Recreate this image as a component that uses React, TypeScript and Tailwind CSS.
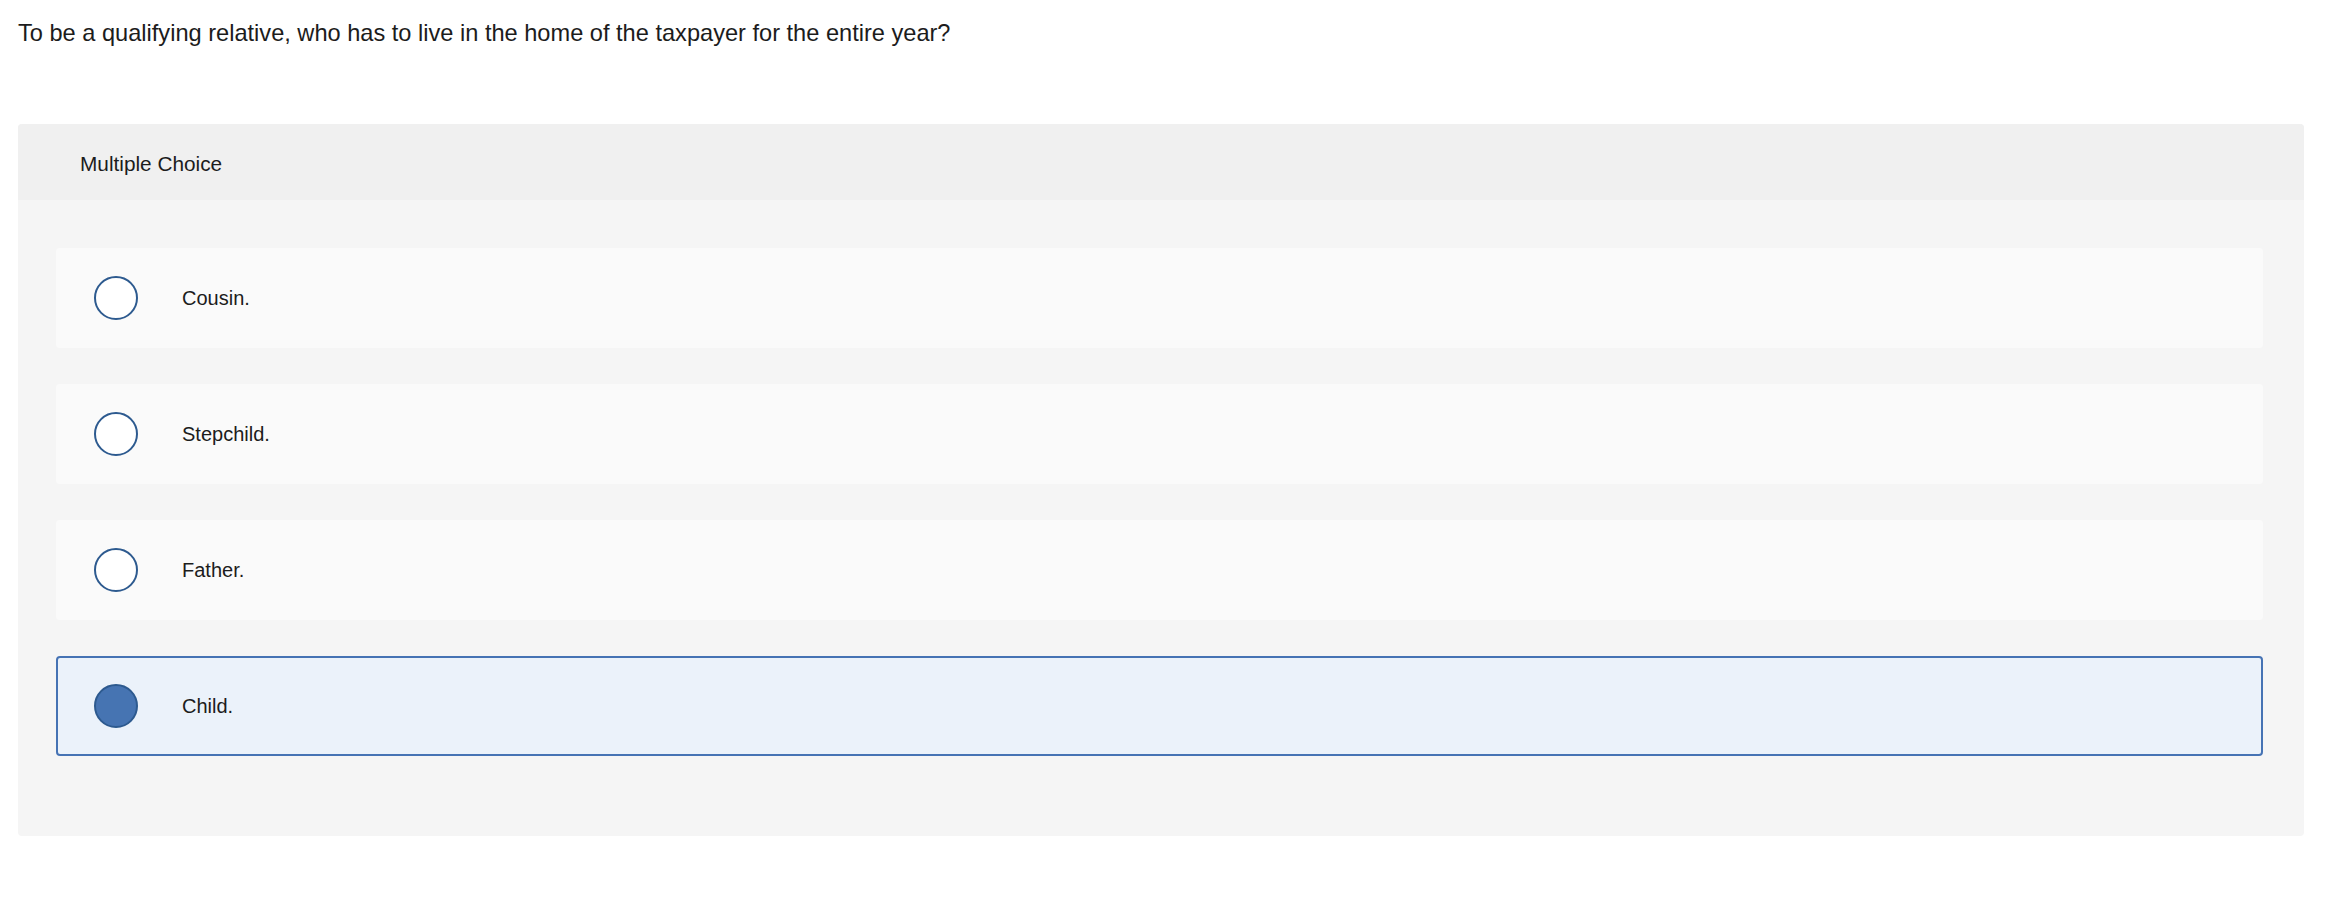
import React, { useState } from 'react';

const options = ['Cousin.', 'Stepchild.', 'Father.', 'Child.'];

export default function App() {
  const [selected, setSelected] = useState(3);

  return (
    <div
      className="min-h-[920px] bg-white pl-[18px] pr-[22px] pt-[16px] text-[#1c1c1c]"
      style={{ fontFamily: '"Liberation Sans", Arial, sans-serif' }}
    >
      {/* Question */}
      <p className="text-[23.6px] leading-[34px]">
        To be a qualifying relative, who has to live in the home of the taxpayer for the entire year?
      </p>

      {/* Answer panel */}
      <div className="mt-[74px] overflow-hidden rounded-[4px] bg-[#f5f5f5]">
        <div className="flex h-[76px] items-center bg-[#f0f0f0] pl-[62px] pt-[3px] text-[20.8px]">
          Multiple Choice
        </div>

        <div className="flex flex-col gap-[36px] pb-[80px] pl-[38px] pr-[41px] pt-[48px]">
          {options.map((label, i) => {
            const isSel = selected === i;
            return (
              <button
                key={label}
                onClick={() => setSelected(i)}
                className={
                  isSel
                    ? 'flex h-[100px] items-center rounded-[4px] border-2 border-[#4673b4] bg-[#ebf2fa] pl-[36px] text-left'
                    : 'flex h-[100px] items-center rounded-[4px] border-2 border-transparent bg-[#fafafa] pl-[36px] text-left'
                }
              >
                <span
                  className={
                    isSel
                      ? 'h-[44px] w-[44px] shrink-0 rounded-full border-2 border-[#2d5a8f] bg-[#4674b2]'
                      : 'h-[44px] w-[44px] shrink-0 rounded-full border-2 border-[#2d5a8f] bg-white'
                  }
                />
                <span className="ml-[44px] text-[20px]">{label}</span>
              </button>
            );
          })}
        </div>
      </div>
    </div>
  );
}
